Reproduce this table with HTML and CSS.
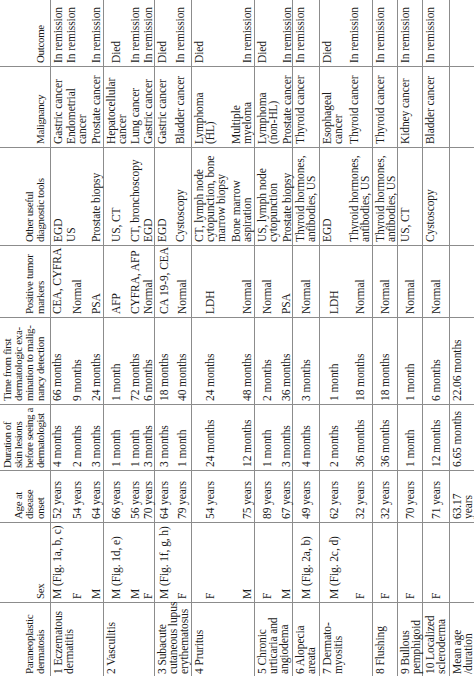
FILE: index.html
```html
<!DOCTYPE html>
<html>
<head>
<meta charset="utf-8">
<link rel="stylesheet" href="styles.css">
</head>
<body>
<div class="page">
<table class="t">
<colgroup>
<col class="c-derm"><col class="c-sex"><col class="c-age"><col class="c-dur"><col class="c-time"><col class="c-mark"><col class="c-other"><col class="c-mal"><col class="c-out">
</colgroup>
<thead>
<tr class="hd">
<th>Paraneoplastic<br>dermatosis</th>
<th>Sex</th>
<th>Age at<br>disease<br>onset</th>
<th class="tight">Duration of<br>skin lesions<br>before seeing a<br>dermatologist</th>
<th>Time from first<br>dermatologic exa-<br>mination to malig-<br>nancy detection</th>
<th>Positive tumor<br>markers</th>
<th>Other useful<br>diagnostic tools</th>
<th>Malignancy</th>
<th>Outcome</th>
</tr>
</thead>
<tbody>
<tr class="g h14"><td rowspan="3" class="lbl">1 Eczematous<br>dermatitis</td><td>M (Fig. 1a, b, c)</td><td>52 years</td><td>4 months</td><td>66 months</td><td>CEA, CYFRA</td><td class="r">EGD</td><td class="r">Gastric cancer</td><td class="r">In remission</td></tr>
<tr class="h25"><td>F</td><td>54 years</td><td>2 months</td><td>9 months</td><td>Normal</td><td class="r">US</td><td class="r">Endometrial<br>cancer</td><td class="r">In remission</td></tr>
<tr class="h14"><td>M</td><td>64 years</td><td>3 months</td><td>24 months</td><td>PSA</td><td class="r">Prostate biopsy</td><td class="r">Prostate cancer</td><td class="r">In remission</td></tr>

<tr class="g h25"><td rowspan="3" class="lbl">2 Vasculitis</td><td>M (Fig. 1d, e)</td><td>66 years</td><td>1 month</td><td>1 month</td><td>AFP</td><td>US, CT</td><td class="r">Hepatocellular<br>cancer</td><td>Died</td></tr>
<tr class="h13"><td>M</td><td>56 years</td><td>1 month</td><td>72 months</td><td>CYFRA, AFP</td><td class="r">CT, bronchoscopy</td><td class="r">Lung cancer</td><td class="r">In remission</td></tr>
<tr class="h13"><td>F</td><td>70 years</td><td>3 months</td><td>6 months</td><td>Normal</td><td class="r">EGD</td><td class="r">Gastric cancer</td><td class="r">In remission</td></tr>

<tr class="g h18"><td rowspan="2" class="lbl">3 Subacute<br>cutaneous lupus<br>erythematosus</td><td>M (Fig. 1f, g, h)</td><td>64 years</td><td>3 months</td><td>18 months</td><td>CA 19-9, CEA</td><td class="r">EGD</td><td class="r">Gastric cancer</td><td class="r">Died</td></tr>
<tr class="h19"><td>F</td><td>79 years</td><td>1 month</td><td>40 months</td><td>Normal</td><td class="r">Cystoscopy</td><td class="r">Bladder cancer</td><td class="r">In remission</td></tr>

<tr class="g h37"><td rowspan="2" class="lbl">4 Pruritus</td><td>F</td><td>54 years</td><td>24 months</td><td>24 months</td><td>LDH</td><td class="r">CT, lymph node<br>cytopunction, bone<br>marrow biopsy</td><td class="r">Lymphoma<br>(HL)</td><td class="r">Died</td></tr>
<tr class="low h26"><td>M</td><td>75 years</td><td>12 months</td><td>48 months</td><td>Normal</td><td>Bone marrow<br>aspiration</td><td>Multiple<br>myeloma</td><td>In remission</td></tr>

<tr class="g h25"><td rowspan="2" class="lbl">5 Chronic<br>urticaria and<br>angiodema</td><td>F</td><td>89 years</td><td>1 month</td><td>2 months</td><td>Normal</td><td class="r">US, lymph node<br>cytopunction</td><td class="r">Lymphoma<br>(non-HL)</td><td class="r">Died</td></tr>
<tr class="h13"><td>M</td><td>67 years</td><td>3 months</td><td>36 months</td><td>PSA</td><td class="r">Prostate biopsy</td><td class="r">Prostate cancer</td><td class="r">In remission</td></tr>

<tr class="g h27"><td class="lbl">6 Alopecia<br>areata</td><td>M (Fig. 2a, b)</td><td>49 years</td><td>4 months</td><td>3 months</td><td>Normal</td><td class="r">Thyroid hormones,<br>antibodies, US</td><td class="r">Thyroid cancer</td><td class="r">In remission</td></tr>

<tr class="g h27"><td rowspan="2" class="lbl">7 Dermato-<br>myositis</td><td>M (Fig. 2c, d)</td><td>62 years</td><td>2 months</td><td>1 month</td><td>LDH</td><td class="r">EGD</td><td class="r">Esophageal<br>cancer</td><td class="r">Died</td></tr>
<tr class="h26"><td>F</td><td>32 years</td><td>36 months</td><td>18 months</td><td>Normal</td><td class="r">Thyroid hormones,<br>antibodies, US</td><td class="r">Thyroid cancer</td><td class="r">In remission</td></tr>

<tr class="g h24"><td class="lbl">8 Flushing</td><td>F</td><td>32 years</td><td>36 months</td><td>18 months</td><td>Normal</td><td class="r">Thyroid hormones,<br>antibodies, US</td><td class="r">Thyroid cancer</td><td class="r">In remission</td></tr>

<tr class="g h25"><td class="lbl">9 Bullous<br>pemphigoid</td><td>F</td><td>70 years</td><td>1 month</td><td>1 month</td><td>Normal</td><td class="r">US, CT</td><td class="r">Kidney cancer</td><td class="r">In remission</td></tr>

<tr class="g h27"><td class="lbl">10 Localized<br>scleroderma</td><td>F</td><td>71 years</td><td>12 months</td><td>6 months</td><td>Normal</td><td class="r">Cystoscopy</td><td class="r">Bladder cancer</td><td class="r">In remission</td></tr>

<tr class="g h27"><td class="lbl">Mean age<br>/duration</td><td></td><td class="r">63.17<br>years</td><td class="r">6.65 months</td><td class="r">22.06 months</td><td></td><td></td><td></td><td></td></tr>
</tbody>
</table>
</div>
</body>
</html>
```

FILE: styles.css
```css
html, body {
  margin: 0;
  padding: 0;
  background: #ffffff;
  overflow: hidden;
}

body {
  width: 474px;
  height: 676px;
}

.page {
  width: 676px;
  height: 474px;
  overflow: hidden;
  transform-origin: 0 0;
  transform: translateY(676px) rotate(-90deg);
}

.t {
  border-collapse: collapse;
  table-layout: fixed;
  width: 693px;
  margin-left: -2px;
  font-family: "Liberation Serif", "Times New Roman", serif;
  font-size: 11.5px;
  letter-spacing: -0.1px;
  line-height: 10.9px;
  color: #1a1a1a;
}

.c-derm { width: 75px; }
.c-sex { width: 80px; }
.c-age { width: 52px; }
.c-dur { width: 66px; }
.c-time { width: 87px; }
.c-mark { width: 72px; }
.c-other { width: 98px; }
.c-mal { width: 81px; }
.c-out { width: 82px; }

.t th,
.t td {
  padding: 1px 3px 0;
  text-align: left;
  vertical-align: middle;
  white-space: nowrap;
  font-weight: normal;
  border-left: 1px solid #8c8c8c;
  border-right: 1px solid #8c8c8c;
}

.t th {
  vertical-align: bottom;
  padding: 2px 3px 4px;
  font-size: 11px;
  letter-spacing: -0.35px;
  border-bottom: 1px solid #8c8c8c;
}

.t th.tight {
  padding-left: 2px;
  padding-right: 1px;
  letter-spacing: -0.45px;
}

.t tr.hd { height: 50px; }
.t tr.h13 { height: 13px; }
.t tr.h14 { height: 14px; }
.t tr.h18 { height: 18px; }
.t tr.h19 { height: 19px; }
.t tr.h24 { height: 24px; }
.t tr.h25 { height: 25px; }
.t tr.h26 { height: 26px; }
.t tr.h27 { height: 27px; }
.t tr.h37 { height: 37px; }

.t tr.g td {
  border-top: 1px solid #8c8c8c;
}

.t td.r,
.t td.lbl {
  vertical-align: top;
  padding-top: 2px;
}

.t tr.low td {
  vertical-align: bottom;
  padding-bottom: 1px;
}
```
